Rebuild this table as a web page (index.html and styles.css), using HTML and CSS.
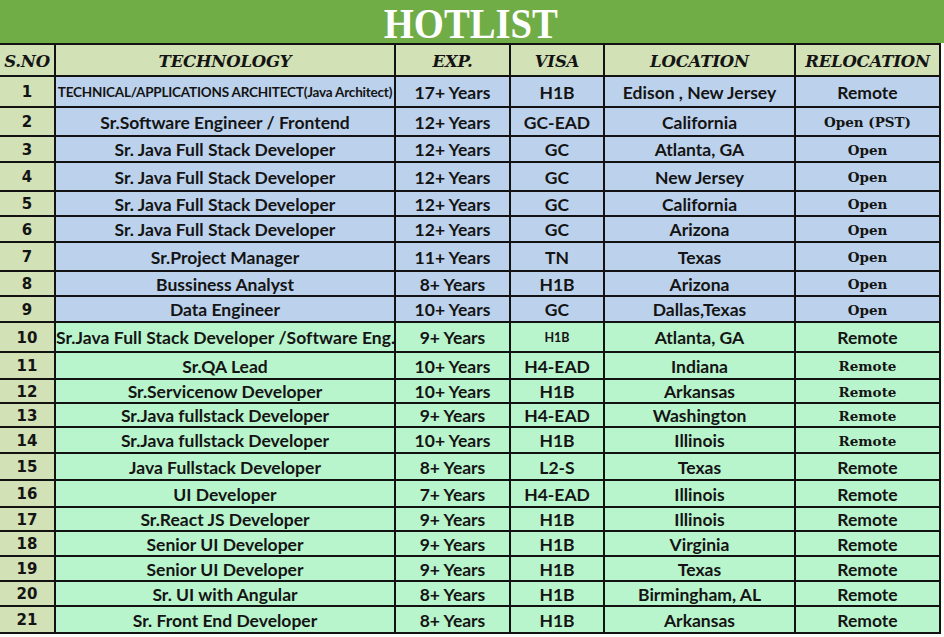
FILE: index.html
```html
<!DOCTYPE html>
<html>
<head>
<meta charset="utf-8">
<title>Hotlist</title>
<link rel="stylesheet" href="styles.css">
</head>
<body>
<div class="sheet">
  <div class="title"><span class="title-text">HOTLIST</span></div>
  <table class="hotlist">
    <thead>
      <tr>
        <th class="c-no">S.NO</th>
        <th class="c-tech">TECHNOLOGY</th>
        <th class="c-exp">EXP.</th>
        <th class="c-visa">VISA</th>
        <th class="c-loc">LOCATION</th>
        <th class="c-rel">RELOCATION</th>
      </tr>
    </thead>
    <tbody>
      <tr class="blue"><td class="no">1</td><td class="tiny">TECHNICAL/APPLICATIONS ARCHITECT(Java Architect)</td><td>17+ Years</td><td>H1B</td><td>Edison , New Jersey</td><td>Remote</td></tr>
      <tr class="blue"><td class="no">2</td><td>Sr.Software Engineer / Frontend</td><td>12+ Years</td><td>GC-EAD</td><td>California</td><td class="serif">Open (PST)</td></tr>
      <tr class="blue"><td class="no">3</td><td>Sr. Java Full Stack Developer</td><td>12+ Years</td><td>GC</td><td>Atlanta, GA</td><td class="serif">Open</td></tr>
      <tr class="blue"><td class="no">4</td><td>Sr. Java Full Stack Developer</td><td>12+ Years</td><td>GC</td><td>New Jersey</td><td class="serif">Open</td></tr>
      <tr class="blue"><td class="no">5</td><td>Sr. Java Full Stack Developer</td><td>12+ Years</td><td>GC</td><td>California</td><td class="serif">Open</td></tr>
      <tr class="blue"><td class="no">6</td><td>Sr. Java Full Stack Developer</td><td>12+ Years</td><td>GC</td><td>Arizona</td><td class="serif">Open</td></tr>
      <tr class="blue"><td class="no">7</td><td>Sr.Project Manager</td><td>11+ Years</td><td>TN</td><td>Texas</td><td class="serif">Open</td></tr>
      <tr class="blue"><td class="no">8</td><td>Bussiness Analyst</td><td>8+ Years</td><td>H1B</td><td>Arizona</td><td class="serif">Open</td></tr>
      <tr class="blue"><td class="no">9</td><td>Data Engineer</td><td>10+ Years</td><td>GC</td><td>Dallas,Texas</td><td class="serif">Open</td></tr>
      <tr class="mint"><td class="no">10</td><td class="wide">Sr.Java Full Stack Developer /Software Eng.</td><td>9+ Years</td><td class="small">H1B</td><td>Atlanta, GA</td><td>Remote</td></tr>
      <tr class="mint"><td class="no">11</td><td>Sr.QA Lead</td><td>10+ Years</td><td>H4-EAD</td><td>Indiana</td><td class="serif">Remote</td></tr>
      <tr class="mint"><td class="no">12</td><td>Sr.Servicenow Developer</td><td>10+ Years</td><td>H1B</td><td>Arkansas</td><td class="serif">Remote</td></tr>
      <tr class="mint"><td class="no">13</td><td>Sr.Java fullstack Developer</td><td>9+ Years</td><td>H4-EAD</td><td>Washington</td><td class="serif">Remote</td></tr>
      <tr class="mint"><td class="no">14</td><td>Sr.Java fullstack Developer</td><td>10+ Years</td><td>H1B</td><td>Illinois</td><td class="serif">Remote</td></tr>
      <tr class="mint"><td class="no">15</td><td>Java Fullstack Developer</td><td>8+ Years</td><td>L2-S</td><td>Texas</td><td>Remote</td></tr>
      <tr class="mint"><td class="no">16</td><td>UI Developer</td><td>7+ Years</td><td>H4-EAD</td><td>Illinois</td><td>Remote</td></tr>
      <tr class="mint"><td class="no">17</td><td>Sr.React JS Developer</td><td>9+ Years</td><td>H1B</td><td>Illinois</td><td>Remote</td></tr>
      <tr class="mint"><td class="no">18</td><td>Senior UI Developer</td><td>9+ Years</td><td>H1B</td><td>Virginia</td><td>Remote</td></tr>
      <tr class="mint"><td class="no">19</td><td>Senior UI Developer</td><td>9+ Years</td><td>H1B</td><td>Texas</td><td>Remote</td></tr>
      <tr class="mint"><td class="no">20</td><td>Sr. UI with Angular</td><td>8+ Years</td><td>H1B</td><td>Birmingham, AL</td><td>Remote</td></tr>
      <tr class="mint"><td class="no">21</td><td>Sr. Front End Developer</td><td>8+ Years</td><td>H1B</td><td>Arkansas</td><td>Remote</td></tr>
    </tbody>
  </table>
</div>
</body>
</html>
```
FILE: styles.css
```css
html, body {
  margin: 0;
  padding: 0;
  background: #fbfcf8;
}

.sheet {
  width: 944px;
}

.title {
  height: 43px;
  background: #70ad47;
  display: flex;
  justify-content: center;
  align-items: center;
  width: 944px;
  box-sizing: border-box;
  padding-right: 2px;
}

.title-text {
  display: inline-block;
  font-family: "Liberation Serif", "Times New Roman", serif;
  font-weight: bold;
  font-size: 43px;
  line-height: 1;
  color: #ffffff;
  transform: scaleX(0.9);
  padding-top: 3px;
}

.hotlist {
  border-collapse: separate;
  border-spacing: 0;
  width: 941px;
  table-layout: fixed;
  font-family: Lato, "Liberation Sans", sans-serif;
  font-weight: bold;
  color: #141414;
}

.hotlist th,
.hotlist td {
  padding: 0;
  text-align: center;
  vertical-align: middle;
  white-space: nowrap;
  overflow: visible;
  border-right: 2px solid #121212;
  border-bottom: 2px solid #121212;
  box-sizing: border-box;
}

.c-no { width: 56px; }
.c-tech { width: 340px; }
.c-exp { width: 115px; }
.c-visa { width: 94px; }
.c-loc { width: 191px; }
.c-rel { width: 145px; }

.hotlist thead tr {
  height: 34px;
}

.hotlist th {
  border-top: 2px solid #121212;
  background: #d2e1b6;
  font-family: "DejaVu Serif", "Liberation Serif", serif;
  font-style: italic;
  font-weight: bold;
  font-size: 16.5px;
  letter-spacing: -0.2px;
  color: #141414;
  padding-top: 3px;
}

.hotlist td {
  font-size: 17.5px;
  padding-top: 1px;
}

.blue td { background: #bcd2ec; }
.mint td { background: #b9f5cc; }

.hotlist td.no {
  background: #d2e1b6;
  font-family: "DejaVu Sans", Verdana, sans-serif;
  font-size: 15px;
  font-weight: bold;
}

.hotlist td.tiny {
  font-size: 13.5px;
  letter-spacing: -0.2px;
}

.hotlist td.wide {
  letter-spacing: 0.05px;
}

.hotlist td.small {
  font-size: 12.5px;
}

.hotlist td.serif {
  font-family: "DejaVu Serif", "Liberation Serif", serif;
  font-size: 13.5px;
  font-weight: bold;
}

tbody tr:nth-child(1) { height: 31px; }
tbody tr:nth-child(2) { height: 29px; }
tbody tr:nth-child(3) { height: 26px; }
tbody tr:nth-child(4) { height: 29px; }
tbody tr:nth-child(5) { height: 25px; }
tbody tr:nth-child(6) { height: 26px; }
tbody tr:nth-child(7) { height: 29px; }
tbody tr:nth-child(8) { height: 25px; }
tbody tr:nth-child(9) { height: 26px; }
tbody tr:nth-child(10) { height: 30px; }
tbody tr:nth-child(11) { height: 27px; }
tbody tr:nth-child(12) { height: 23px; }
tbody tr:nth-child(13) { height: 24px; }
tbody tr:nth-child(14) { height: 26px; }
tbody tr:nth-child(15) { height: 27px; }
tbody tr:nth-child(16) { height: 27px; }
tbody tr:nth-child(17) { height: 23px; }
tbody tr:nth-child(18) { height: 25px; }
tbody tr:nth-child(19) { height: 25px; }
tbody tr:nth-child(20) { height: 25px; }
tbody tr:nth-child(21) { height: 27px; }
```
